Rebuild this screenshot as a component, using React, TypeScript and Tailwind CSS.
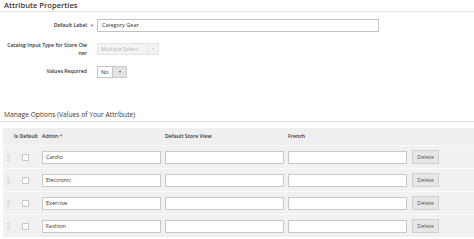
import React from "react";

const font = { fontFamily: '"Open Sans", "Noto Sans", sans-serif' };

function DragHandle() {
  return (
    <div className="w-[3px] h-[7px] flex flex-col justify-between">
      <div className="h-[1px] bg-[#d6d6d6]" />
      <div className="h-[1px] bg-[#d6d6d6]" />
      <div className="h-[1px] bg-[#d6d6d6]" />
      <div className="h-[1px] bg-[#d6d6d6]" />
    </div>
  );
}

function Row({ name }: { name: string }) {
  return (
    <div className="flex items-center h-[23px] border-t border-[#fafafa] bg-[#f1f1f1]">
      <div className="w-[16px] flex justify-start pl-[4px]">
        <DragHandle />
      </div>
      <div className="w-[23px] flex justify-start pl-[3px]">
        <div className="w-[7px] h-[7px] border border-[#c8c8c8] bg-white" />
      </div>
      <div className="w-[119px] h-[13px] border border-[#c9c9c9] bg-white text-[5.5px] text-[#333] pl-[3px] flex items-center">
        {name}
      </div>
      <div className="w-[4px]" />
      <div className="w-[119px] h-[13px] border border-[#c9c9c9] bg-white" />
      <div className="w-[4px]" />
      <div className="w-[119px] h-[13px] border border-[#c9c9c9] bg-white" />
      <div className="w-[5px]" />
      <div className="w-[27px] h-[14px] border border-[#d0d0d0] bg-[#e6e6e6] text-[5.5px] text-[#555] flex items-center justify-center">
        Delete
      </div>
    </div>
  );
}

export default function App() {
  return (
    <div className="w-[474px] h-[239px] bg-white overflow-hidden text-[#333]" style={font}>
      <div className="h-[12px] border-b border-[#e3e3e3] pl-[4px] pt-[1px] text-[7.6px] leading-[9px] font-semibold text-[#41362f]">
        Attribute Properties
      </div>
      {/* Default label */}
      <div className="flex items-center mt-[7px] h-[13px]">
        <div className="w-[87px] text-right text-[5.2px] font-semibold text-[#333]">Default Label</div>
        <div className="w-[10px] text-center text-[6px] text-[#e22626] leading-none">*</div>
        <div className="w-[282px] h-[13px] border border-[#c2c2c2] bg-white text-[5.5px] pl-[4px] flex items-center">
          Category Gear
        </div>
      </div>
      {/* Catalog input type */}
      <div className="flex items-center mt-[10px] h-[14px]">
        <div className="w-[87px] text-right text-[5.2px] leading-[8px] font-semibold text-[#333] whitespace-nowrap">
          Catalog Input Type for Store Ow
          <br />
          ner
        </div>
        <div className="w-[10px]" />
        <div className="w-[62px] h-[12px] border border-[#e4e4e4] bg-[#f3f3f3] flex items-center">
          <div className="flex-1 text-[5.5px] text-[#b5b5b5] pl-[3px]">Multiple Select</div>
          <div className="w-[11px] h-full border-l border-[#e4e4e4] flex items-center justify-center">
            <div className="w-0 h-0 border-l-[1.5px] border-r-[1.5px] border-t-[2px] border-l-transparent border-r-transparent border-t-[#c8c8c8]" />
          </div>
        </div>
      </div>
      {/* Values required */}
      <div className="flex items-center mt-[10px] h-[12px]">
        <div className="w-[87px] text-right text-[5.2px] font-semibold text-[#333]">Values Required</div>
        <div className="w-[10px]" />
        <div className="w-[30px] h-[12px] border border-[#c8c8c8] bg-white flex items-center">
          <div className="flex-1 text-[5.5px] text-[#333] pl-[3px]">No</div>
          <div className="w-[14px] h-full bg-[#e3e3e3] border-l border-[#c8c8c8] flex items-center justify-center">
            <div className="w-0 h-0 border-l-[1.5px] border-r-[1.5px] border-t-[2px] border-l-transparent border-r-transparent border-t-[#555]" />
          </div>
        </div>
      </div>
      {/* Manage options */}
      <div className="mt-[31px] h-[13px] border-b border-[#e3e3e3] pl-[4px] pt-[1px] text-[6.7px] leading-[9px] text-[#41362f]">
        Manage Options (Values of Your Attribute)
      </div>
      <div className="ml-[3px] mt-[6px]">
        <div className="flex items-center h-[17px] bg-[#efefef] text-[5.2px] font-semibold text-[#333]">
          <div className="w-[11px]" />
          <div className="w-[28px]">Is Default</div>
          <div className="w-[123px]">
            Admin <span className="text-[#e22626]">*</span>
          </div>
          <div className="w-[123px]">Default Store View</div>
          <div>French</div>
        </div>
        <Row name="Cardio" />
        <Row name="Electronic" />
        <Row name="Exercise" />
        <Row name="Fashion" />
      </div>
    </div>
  );
}
